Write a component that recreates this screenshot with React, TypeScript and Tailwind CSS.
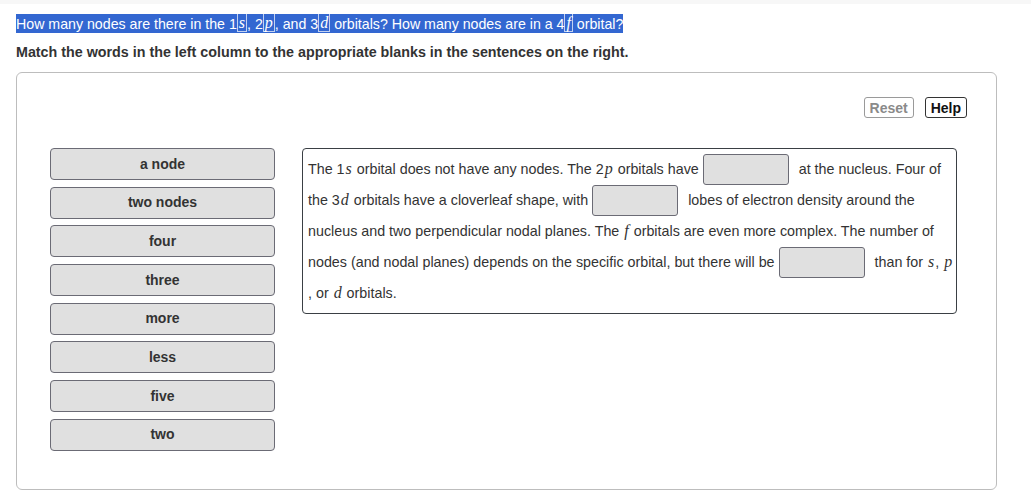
import React from 'react';

const words = ['a node', 'two nodes', 'four', 'three', 'more', 'less', 'five', 'two'];

const M: React.FC<{ children: React.ReactNode; hl?: boolean }> = ({ children, hl }) => (
  <span
    className={`font-['Liberation_Serif',serif] italic text-[16px] leading-none ${
      hl ? 'border-x border-b border-white/70 px-[1px]' : 'px-[1px]'
    }`}
  >
    {children}
  </span>
);

const Blank: React.FC<{ className?: string }> = ({ className = '' }) => (
  <span
    className={`inline-block align-top w-[86px] h-[31px] bg-[#e0e0e0] border border-[#6b6b75] rounded-[3px] ${className}`}
  />
);

export default function App() {
  return (
    <div className="min-h-screen bg-white font-['Liberation_Sans',Arial,sans-serif] text-[14px] text-[#333]">
      <div className="h-[4px] bg-[#f7f7f7]" />
      <div className="px-[16px]">
        {/* Question */}
        <p className="mt-[10px] leading-[19px] text-[14.2px]">
          <span className="bg-[#3367d1] text-white py-[1.5px]">
            How many nodes are there in the 1<M hl>s</M>, 2<M hl>p</M>, and 3<M hl>d</M> orbitals? How many nodes
            are in a 4<M hl>f</M> orbital?
          </span>
        </p>
        <p className="mt-[12px] font-bold leading-[15px] text-[14.3px]">
          Match the words in the left column to the appropriate blanks in the sentences on the right.
        </p>

        {/* Activity */}
        <div className="mt-[12px] w-[981px] h-[418px] border border-[#bdbdbd] rounded-[6px]">
          <div className="flex justify-end gap-[11px] pt-[24px] pr-[29px]">
            <button className="h-[21px] px-[5px] border border-[#9a9a9a] rounded-[3px] font-bold text-[#8a8a8a] leading-[18px]">
              Reset
            </button>
            <button className="h-[21px] px-[5px] border border-[#333] rounded-[3px] font-bold text-[#111] leading-[18px]">
              Help
            </button>
          </div>

          <div className="flex items-start pl-[33px] mt-[30px]">
            <div className="flex flex-col gap-[6.7px] w-[225px]">
              {words.map((w) => (
                <div
                  key={w}
                  className="h-[32px] flex items-center justify-center bg-[#e0e0e0] border-[1.5px] border-[#6b6b75] rounded-[4px] font-bold text-[#333]"
                >
                  {w}
                </div>
              ))}
            </div>

            <div className="ml-[27px] w-[655px] border-[1.5px] border-[#3a3f44] rounded-[4px] pt-[5px] pb-[4px] pl-[5px] pr-[4px] leading-[31px] text-[14.3px] whitespace-nowrap">
              The 1<M>s</M> orbital does not have any nodes. The 2<M>p</M> orbitals have{' '}
              <Blank className="mr-[6px]" /> at the nucleus. Four of
              <br />
              the 3<M>d</M> orbitals have a cloverleaf shape, with <Blank className="mr-[6px]" /> lobes of electron
              density around the
              <br />
              nucleus and two perpendicular nodal planes. The <M>f</M> orbitals are even more complex. The number of
              <br />
              nodes (and nodal planes) depends on the specific orbital, but there will be{' '}
              <Blank className="mr-[6px]" /> than for <M>s</M>, <M>p</M>
              <br />, or <M>d</M> orbitals.
            </div>
          </div>
        </div>
      </div>
    </div>
  );
}
